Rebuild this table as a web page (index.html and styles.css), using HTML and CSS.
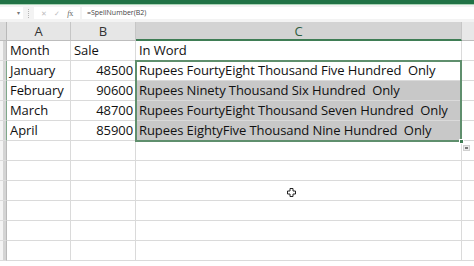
FILE: index.html
```html
<!DOCTYPE html>
<html lang="en">
<head>
    <meta charset="UTF-8">
    <title>SpellNumber</title>
    <link rel="stylesheet" href="styles.css">
</head>
<body>
    <div class="ribbon-edge"></div>

    <div class="formula-row">
        <div class="name-box"><span class="drop">&#9662;</span></div>
        <div class="splitter"></div>
        <div class="fx-tools">
            <span class="tool">&#10005;</span>
            <span class="tool">&#10003;</span>
            <span class="tool fx"><i>f</i>x</span>
        </div>
        <div class="formula-input">=SpellNumber(B2)</div>
    </div>

    <div class="sheet">
        <div class="stub head-stub"></div>
        <div class="head">A</div>
        <div class="head">B</div>
        <div class="head head-active">C</div>
        <div class="head head-rest"></div>

        <div class="stub"></div>
        <div class="cell">Month</div>
        <div class="cell">Sale</div>
        <div class="cell">In Word</div>
        <div class="cell rest"></div>

        <div class="stub stub-sel"></div>
        <div class="cell">January</div>
        <div class="cell num">48500</div>
        <div class="cell">Rupees FourtyEight Thousand Five Hundred  Only</div>
        <div class="cell rest"></div>

        <div class="stub stub-sel"></div>
        <div class="cell">February</div>
        <div class="cell num">90600</div>
        <div class="cell filled">Rupees Ninety Thousand Six Hundred  Only</div>
        <div class="cell rest"></div>

        <div class="stub stub-sel"></div>
        <div class="cell">March</div>
        <div class="cell num">48700</div>
        <div class="cell filled">Rupees FourtyEight Thousand Seven Hundred  Only</div>
        <div class="cell rest"></div>

        <div class="stub stub-sel"></div>
        <div class="cell">April</div>
        <div class="cell num">85900</div>
        <div class="cell filled">Rupees EightyFive Thousand Nine Hundred  Only</div>
        <div class="cell rest"></div>

        <div class="stub"></div><div class="cell"></div><div class="cell"></div><div class="cell"></div><div class="cell rest"></div>
        <div class="stub"></div><div class="cell"></div><div class="cell"></div><div class="cell"></div><div class="cell rest"></div>
        <div class="stub"></div><div class="cell"></div><div class="cell"></div><div class="cell"></div><div class="cell rest"></div>
        <div class="stub"></div><div class="cell"></div><div class="cell"></div><div class="cell"></div><div class="cell rest"></div>
        <div class="stub"></div><div class="cell"></div><div class="cell"></div><div class="cell"></div><div class="cell rest"></div>
        <div class="stub"></div><div class="cell"></div><div class="cell"></div><div class="cell"></div><div class="cell rest"></div>

        <!-- selected range C2:C5 -->
        <div class="selection">
            <span class="fill-handle"></span>
        </div>
        <div class="quick-analysis"></div>
    </div>

    <svg class="pointer" width="9" height="9" viewBox="0 0 9 9">
        <path d="M3 0.5h3v2.5h2.5v3H6v2.5H3V6H0.5V3H3z" fill="#fff" stroke="#222" stroke-width="1"/>
    </svg>
</body>
</html>
```

FILE: styles.css
```css
* {
    margin: 0;
    padding: 0;
    box-sizing: border-box;
}

body {
    width: 474px;
    height: 266px;
    overflow: hidden;
    background: #ffffff;
    font-family: "Open Sans", sans-serif;
    position: relative;
}

.ribbon-edge {
    height: 5px;
    background: #217346;
    border-bottom: 1px solid #a9d3b6;
}

.formula-row {
    height: 17px;
    background: #f3f3f3;
    display: flex;
    align-items: center;
    padding: 1px 0 2px 0;
}

.name-box {
    width: 23px;
    height: 12px;
    background: #fff;
    display: flex;
    justify-content: flex-end;
    align-items: center;
    padding-right: 3px;
}

.drop {
    font-size: 6px;
    color: #777;
}

.splitter {
    width: 1px;
    height: 9px;
    margin: 0 5px;
    border-left: 1px dotted #b5b5b5;
}

.fx-tools {
    width: 46px;
    height: 12px;
    background: #fff;
    display: flex;
    align-items: center;
    justify-content: space-around;
    padding: 0 3px;
    margin-right: 2px;
}

.tool {
    font-size: 7px;
    color: #bdbdbd;
}

.tool.fx {
    color: #666;
    font-family: "Liberation Serif", serif;
    font-size: 8px;
}

.formula-input {
    flex: 1;
    height: 12px;
    background: #fff;
    font-size: 7px;
    line-height: 12px;
    color: #444;
    padding-left: 5px;
}

.sheet {
    display: grid;
    grid-template-columns: 7px 64px 65px 326px 1fr;
    grid-template-rows: 19px repeat(11, 20px);
    position: relative;
}

.stub {
    background: linear-gradient(to right, #f4f4f4 0 3px, #d4d4d4 3px);
    border-right: 1px solid #b9b9b9;
    border-bottom: 1px solid #dcdcdc;
}

.stub-sel {
    border-right: 1px solid #7fa88a;
}

.head-stub {
    background: #dcdcdc;
    border-bottom: 1px solid #bdbdbd;
}

.head {
    background: #e6e6e6;
    border-right: 1px solid #c6c6c6;
    border-bottom: 1px solid #bdbdbd;
    display: flex;
    align-items: center;
    justify-content: center;
    font-size: 13px;
    color: #333;
}

.head-active {
    background: #d3d3d3;
    border-bottom: 2px solid #3f7d55;
    color: #2f5d40;
}

.head-rest {
    background: #e8e8e8;
    border-right: none;
}

.cell {
    border-right: 1px solid #dadada;
    border-bottom: 1px solid #dadada;
    display: flex;
    align-items: flex-end;
    padding: 0 2px 1px 3px;
    font-size: 13px;
    letter-spacing: -0.08px;
    line-height: 18px;
    color: #111;
    white-space: pre;
}

.num {
    justify-content: flex-end;
    padding-right: 2px;
}

.filled {
    background: #c8c8c8;
}

.rest {
    border-right: none;
}

.selection {
    position: absolute;
    left: 135px;
    top: 38px;
    width: 327px;
    height: 82px;
    border: 2px solid #5f8f6d;
    pointer-events: none;
}

.fill-handle {
    position: absolute;
    right: -4px;
    bottom: -4px;
    width: 5px;
    height: 5px;
    background: #3f7d55;
    border: 1px solid #fff;
}

.quick-analysis {
    position: absolute;
    left: 463px;
    top: 123px;
    width: 7px;
    height: 6px;
    background: #ececec;
    border: 1px solid #d0d0d0;
}

.quick-analysis::after {
    content: "";
    position: absolute;
    left: 1px;
    top: 1px;
    width: 3px;
    height: 2px;
    background: #777;
}

.pointer {
    position: absolute;
    left: 287px;
    top: 188px;
}
```
